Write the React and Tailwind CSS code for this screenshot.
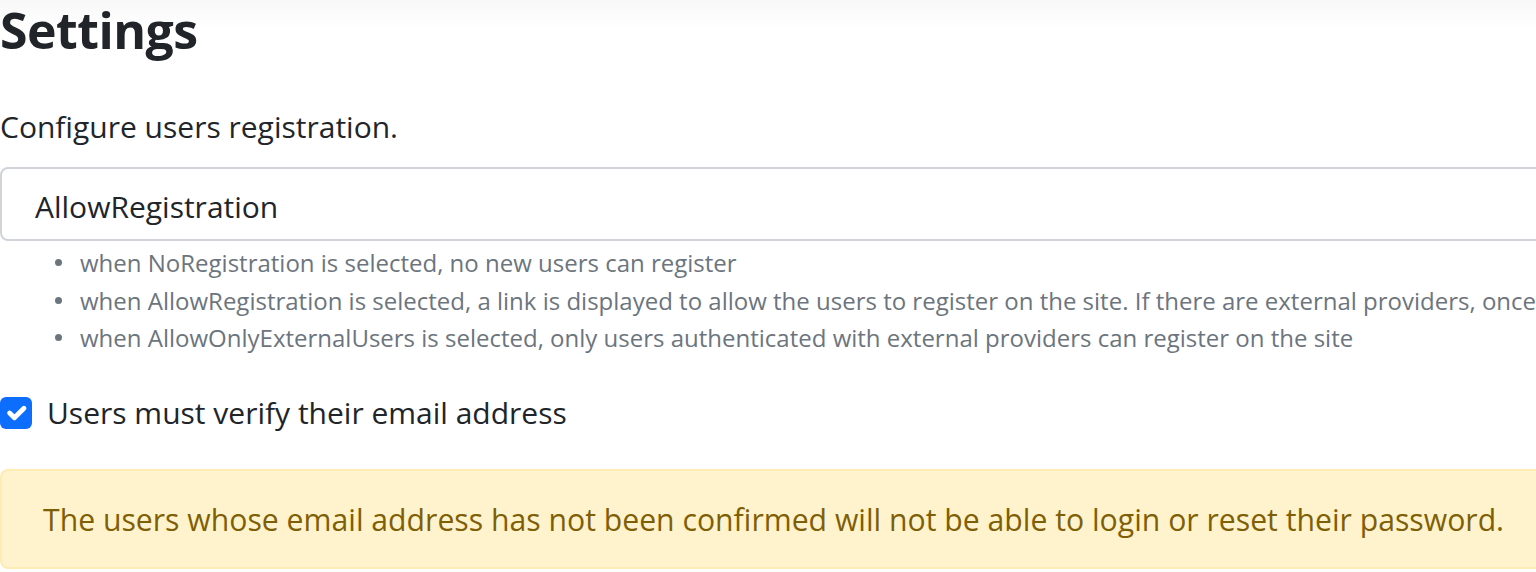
import React from "react";

const rules = [
  "when NoRegistration is selected, no new users can register",
  "when AllowRegistration is selected, a link is displayed to allow the users to register on the site. If there are external providers, once they are authenticated they will be able to register",
  "when AllowOnlyExternalUsers is selected, only users authenticated with external providers can register on the site",
];

const CheckIcon = () => (
  <svg viewBox="0 0 20 20" className="w-full h-full" fill="none">
    <path
      d="M6 10l3 3l6-6"
      stroke="#fff"
      strokeWidth="3"
      strokeLinecap="round"
      strokeLinejoin="round"
    />
  </svg>
);

export default function App() {
  return (
    <div
      className="relative w-screen h-[572px] overflow-hidden bg-white text-[#212529]"
      style={{ fontFamily: '"Open Sans", "Noto Sans", sans-serif' }}
    >
      {/* header shadow */}
      <div className="absolute inset-x-0 top-0 h-[30px] bg-gradient-to-b from-[#f8f8f8] to-white/0" />

      <div className="relative w-[1700px]">
        <h1 className="text-[50px] font-bold leading-[60px] tracking-[-0.5px]">
          Settings
        </h1>

        <p className="mt-[47px] text-[30px] leading-[40px]">
          Configure users registration.
        </p>

        <div className="mt-[20px] h-[74px] flex items-center pt-[5px] pl-[33px] border-2 border-[#d0d4d9] rounded-[8px] text-[30px] leading-[40px]">
          AllowRegistration
        </div>

        <ul className="mt-[3px] flex flex-col text-[24px] leading-[37.5px] text-[#6c757d]">
          {rules.map((rule) => (
            <li key={rule} className="flex items-center whitespace-nowrap">
              <span className="shrink-0 ml-[55px] mr-[18px] w-[7px] h-[7px] rounded-full bg-[#6c757d]" />
              {rule}
            </li>
          ))}
        </ul>

        <div className="mt-[36px] h-[40px] flex items-center gap-[15px]">
          <span className="w-[32px] h-[32px] rounded-[6px] bg-[#0d6efd]">
            <CheckIcon />
          </span>
          <span className="text-[30px] leading-[40px]">
            Users must verify their email address
          </span>
        </div>

        <div className="mt-[36px] h-[100px] flex items-center pt-[3px] pl-[41px] bg-[#fff3cd] border-2 border-[#ffecb5] rounded-[8px] text-[30.2px] leading-[40px] text-[#7f5f06]">
          The users whose email address has not been confirmed will not be able to login or reset their password.
        </div>
      </div>
    </div>
  );
}
